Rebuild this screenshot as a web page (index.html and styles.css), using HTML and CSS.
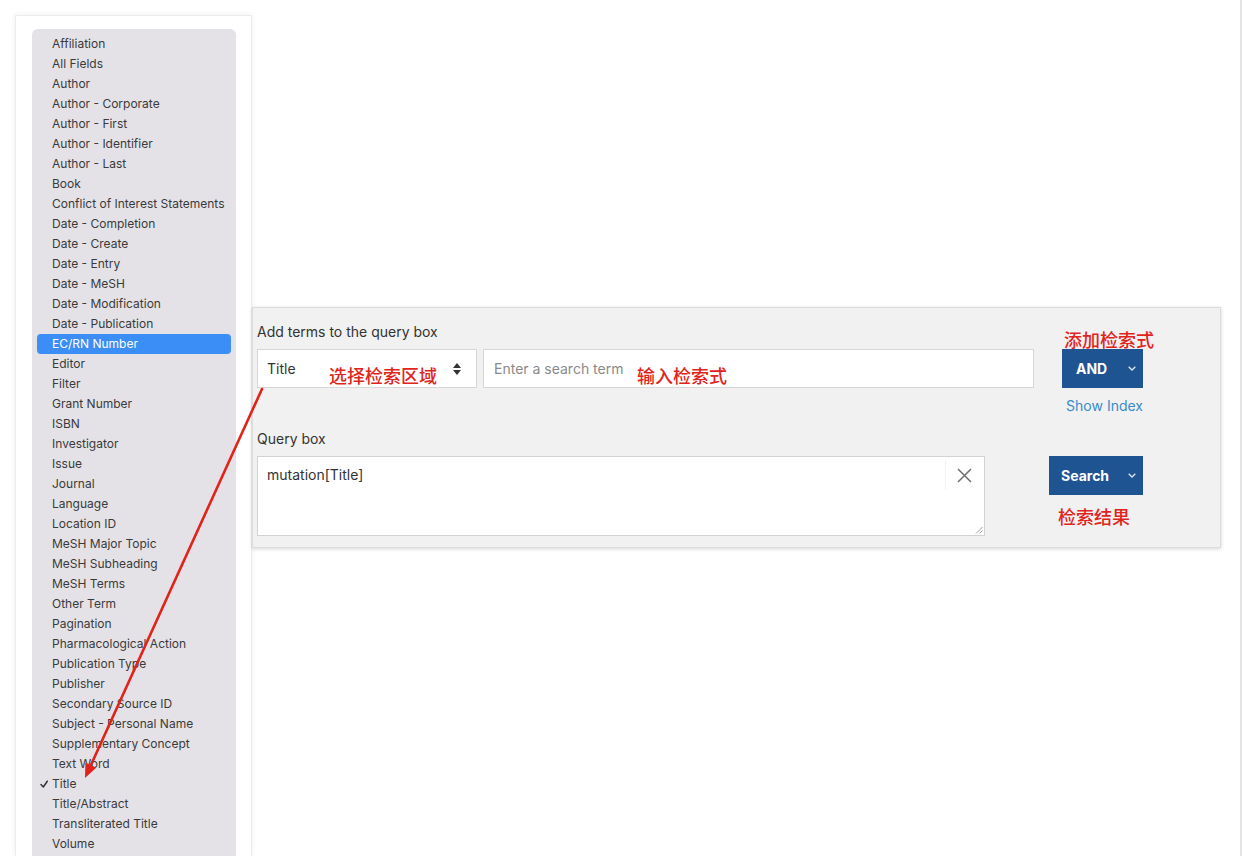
FILE: index.html
```html
<!DOCTYPE html>
<html lang="zh-CN">
<head>
<meta charset="utf-8">
<title>Advanced search</title>
<link rel="stylesheet" href="styles.css">
</head>
<body>
<div class="page">
  <aside class="card">
    <ul class="menu">
      <li class="item">Affiliation</li>
      <li class="item">All Fields</li>
      <li class="item">Author</li>
      <li class="item">Author - Corporate</li>
      <li class="item">Author - First</li>
      <li class="item">Author - Identifier</li>
      <li class="item">Author - Last</li>
      <li class="item">Book</li>
      <li class="item">Conflict of Interest Statements</li>
      <li class="item">Date - Completion</li>
      <li class="item">Date - Create</li>
      <li class="item">Date - Entry</li>
      <li class="item">Date - MeSH</li>
      <li class="item">Date - Modification</li>
      <li class="item">Date - Publication</li>
      <li class="item selected">EC/RN Number</li>
      <li class="item">Editor</li>
      <li class="item">Filter</li>
      <li class="item">Grant Number</li>
      <li class="item">ISBN</li>
      <li class="item">Investigator</li>
      <li class="item">Issue</li>
      <li class="item">Journal</li>
      <li class="item">Language</li>
      <li class="item">Location ID</li>
      <li class="item">MeSH Major Topic</li>
      <li class="item">MeSH Subheading</li>
      <li class="item">MeSH Terms</li>
      <li class="item">Other Term</li>
      <li class="item">Pagination</li>
      <li class="item">Pharmacological Action</li>
      <li class="item">Publication Type</li>
      <li class="item">Publisher</li>
      <li class="item">Secondary Source ID</li>
      <li class="item">Subject - Personal Name</li>
      <li class="item">Supplementary Concept</li>
      <li class="item">Text Word</li>
      <li class="item checked"><svg class="check" width="15" height="20" viewBox="0 0 15 20"><path d="M4 10.6 L6.3 13 L10.3 7.2" fill="none" stroke="#333" stroke-width="1.5" stroke-linecap="round" stroke-linejoin="round"/></svg>Title</li>
      <li class="item">Title/Abstract</li>
      <li class="item">Transliterated Title</li>
      <li class="item">Volume</li>
    </ul>
  </aside>

  <section class="panel">
    <div class="row">
      <div class="left left-add">
        <div class="label">Add terms to the query box</div>
        <div class="fields">
          <div class="select">
            <span class="val">Title</span>
            <span class="note">选择检索区域</span>
            <svg class="sort" width="8" height="12" viewBox="0 0 8 12"><path d="M4 0 L8 5 L0 5 Z M0 7 L8 7 L4 12 Z" fill="#333"/></svg>
          </div>
          <div class="input">
            <span class="ph">Enter a search term</span>
            <span class="note">输入检索式</span>
          </div>
        </div>
      </div>
      <div class="right right-add">
        <div class="note note-top">添加检索式</div>
        <button class="btn btn-and"><span>AND</span><svg class="chev" width="8" height="5" viewBox="0 0 8 5"><path d="M0.7 0.7 L4 4 L7.3 0.7" fill="none" stroke="#dfe6ef" stroke-width="1.3"/></svg></button>
        <a class="link">Show Index</a>
      </div>
    </div>

    <div class="row row-query">
      <div class="left left-query">
        <div class="label">Query box</div>
        <div class="qbox">
          <span class="qtext">mutation[Title]</span>
          <span class="clear"><svg width="15" height="15" viewBox="0 0 15 15"><path d="M1 1 L14 14 M14 1 L1 14" stroke="#6f6f6f" stroke-width="1.5"/></svg></span>
          <svg class="grip" width="8" height="8" viewBox="0 0 8 8"><path d="M7.5 1 L1 7.5 M7.5 4.5 L4.5 7.5" stroke="#9a9a9a" stroke-width="1"/></svg>
        </div>
      </div>
      <div class="right right-query">
        <button class="btn btn-search"><span>Search</span><svg class="chev" width="8" height="5" viewBox="0 0 8 5"><path d="M0.7 0.7 L4 4 L7.3 0.7" fill="none" stroke="#dfe6ef" stroke-width="1.3"/></svg></button>
        <div class="note note-bottom">检索结果</div>
      </div>
    </div>
  </section>
</div>

<svg class="arrow" width="1242" height="856" viewBox="0 0 1242 856">
  <line x1="262" y1="389" x2="90.8" y2="765.3" stroke="#e2231a" stroke-width="2.6" stroke-linecap="round"/>
  <polygon points="85,778 96.2,767.7 85.4,762.8" fill="#e2231a"/>
</svg>
</body>
</html>
```

FILE: styles.css
```css
html, body {
  margin: 0;
  padding: 0;
  height: 100%;
  overflow: hidden;
  background: #ffffff;
}

body {
  font-family: Inter, "Liberation Sans", Arial, sans-serif;
  color: #333333;
  position: relative;
}

.page {
  width: 1242px;
  height: 856px;
  box-sizing: border-box;
  border-right: 2px solid #e4e4e4;
  display: flex;
  align-items: flex-start;
  overflow: hidden;
}

/* ---------- dropdown card ---------- */
.card {
  margin: 15px 0 0 15px;
  width: 237px;
  height: 841px;
  flex: none;
  box-sizing: border-box;
  background: #ffffff;
  border: 1px solid #ececec;
  border-bottom: 0;
  box-shadow: 0 0 6px rgba(0, 0, 0, 0.07);
  padding: 13px 15px 0 16px;
}

.menu {
  list-style: none;
  margin: 0;
  padding: 5px 0 0;
  height: 827px;
  box-sizing: border-box;
  overflow: hidden;
  background: #e4e2e7;
  border-radius: 6px 6px 0 0;
}

.item {
  height: 20px;
  line-height: 20px;
  margin: 0 5px;
  padding-left: 15px;
  font-size: 12px;
  color: #3a3a3a;
  border-radius: 4px;
  display: flex;
  align-items: center;
  white-space: nowrap;
}

.item.selected {
  background: #3b8ef5;
  color: #ffffff;
}

.item.checked {
  padding-left: 0;
}

.check {
  flex: none;
  display: block;
}

/* ---------- query panel ---------- */
.panel {
  margin-top: 307px;
  width: 969px;
  flex: none;
  box-sizing: border-box;
  background: #f1f1f1;
  border: 1px solid #dcdcdc;
  box-shadow: 0 1px 4px rgba(0, 0, 0, 0.16);
  padding: 14px 77px 11px 4px;
}

.row {
  display: flex;
  justify-content: space-between;
  align-items: flex-start;
}

.row-query {
  margin-top: 13px;
}

.label {
  font-size: 14px;
  line-height: 20px;
  height: 20px;
  margin-bottom: 7px;
  color: #333333;
  white-space: nowrap;
}

.left-add {
  width: 777px;
}

.fields {
  display: flex;
  gap: 6px;
}

.select,
.input {
  height: 39px;
  box-sizing: border-box;
  background: #ffffff;
  border: 1px solid #d6d6d6;
  display: flex;
  align-items: center;
  font-size: 14px;
  white-space: nowrap;
}

.select {
  width: 220px;
  padding: 0 15px 0 9px;
}

.select .val {
  width: 62px;
  flex: none;
  color: #333333;
}

.sort {
  margin-left: auto;
  display: block;
}

.input {
  flex: 1;
  padding-left: 10px;
}

.ph {
  width: 143px;
  flex: none;
  color: #8a8a8a;
}

.note {
  color: #e1241b;
  font-family: "Noto Sans CJK SC", "Noto Sans CJK JP", sans-serif;
  font-size: 18px;
  font-weight: 500;
  line-height: 20px;
  white-space: nowrap;
}

.fields .note {
  padding-top: 12px;
}

.right-add {
  width: 81px;
  margin-top: 7px;
  display: flex;
  flex-direction: column;
}

.note-top {
  height: 20px;
  margin-left: 2px;
}

.btn {
  height: 39px;
  border: 0;
  margin: 0;
  background: #1f5493;
  color: #ffffff;
  font-family: Inter, "Liberation Sans", Arial, sans-serif;
  font-size: 14px;
  font-weight: 700;
  display: flex;
  align-items: center;
  box-sizing: border-box;
  padding: 0;
}

.btn-and {
  width: 81px;
  padding-left: 14px;
}

.btn-search {
  width: 94px;
  padding-left: 12px;
}

.chev {
  margin-left: auto;
  margin-right: 7px;
  display: block;
}

.link {
  margin-top: 8px;
  color: #3a8bcb;
  font-size: 14px;
  line-height: 20px;
  text-align: right;
  white-space: nowrap;
}

.left-query {
  width: 728px;
}

.qbox {
  position: relative;
  height: 80px;
  box-sizing: border-box;
  background: #ffffff;
  border: 1px solid #d2d2d2;
  display: flex;
  align-items: flex-start;
  font-size: 14px;
  line-height: 20px;
}

.qtext {
  padding: 8px 9px;
  color: #333333;
}

.clear {
  margin-left: auto;
  margin-right: 1px;
  margin-top: 3px;
  width: 38px;
  height: 30px;
  box-sizing: border-box;
  border-left: 1px solid #f1f1f1;
  display: flex;
  align-items: center;
  justify-content: center;
}

.grip {
  position: absolute;
  right: 1px;
  bottom: 1px;
}

.right-query {
  width: 94px;
  margin-top: 27px;
  display: flex;
  flex-direction: column;
}

.note-bottom {
  height: 20px;
  margin-top: 11px;
  margin-left: 9px;
}

/* ---------- annotation arrow overlay ---------- */
.arrow {
  position: absolute;
  left: 0;
  top: 0;
  pointer-events: none;
}
```
